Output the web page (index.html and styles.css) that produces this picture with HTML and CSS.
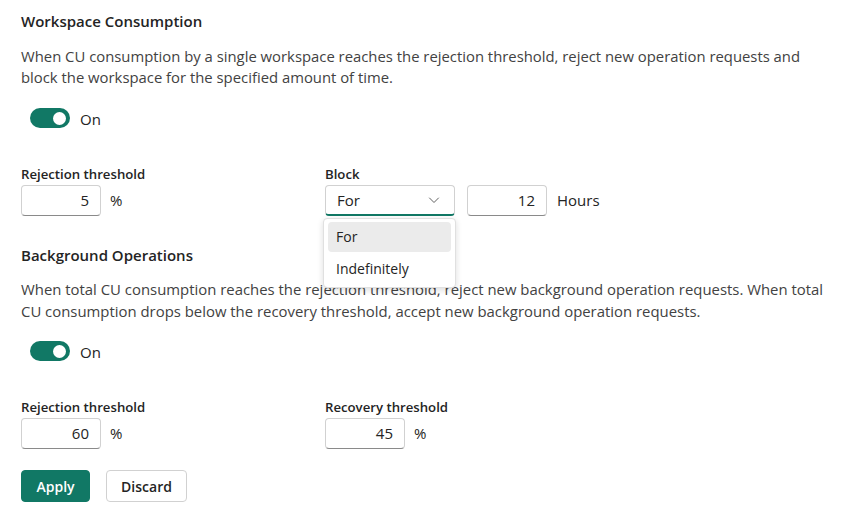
FILE: index.html
```html
<!DOCTYPE html>
<html lang="en">
<head>
<meta charset="utf-8">
<title>Capacity settings</title>
<link rel="stylesheet" href="styles.css">
</head>
<body>
<main class="page">
  <section class="section">
    <h2 class="title">Workspace Consumption</h2>
    <p class="desc">When CU consumption by a single workspace reaches the rejection threshold, reject new operation requests and<br>block the workspace for the specified amount of time.</p>
    <div class="switch-row">
      <span class="switch"><span class="knob"></span></span>
      <span class="switch-label">On</span>
    </div>
    <div class="fields">
      <div class="field">
        <label class="label">Rejection threshold</label>
        <div class="control">
          <div class="input"><span>5</span></div>
          <span class="unit">%</span>
        </div>
      </div>
      <div class="field">
        <label class="label">Block</label>
        <div class="control">
          <div class="select-wrap">
            <div class="select">
              <span>For</span>
              <svg class="chev" width="12" height="12" viewBox="0 0 12 12"><path d="M1.5 4 L6 8.5 L10.5 4" fill="none" stroke="#616161" stroke-width="1" stroke-linecap="round" stroke-linejoin="round"/></svg>
            </div>
            <div class="listbox">
              <div class="option selected">For</div>
              <div class="option">Indefinitely</div>
            </div>
          </div>
          <div class="input"><span>12</span></div>
          <span class="unit hours">Hours</span>
        </div>
      </div>
    </div>
  </section>

  <section class="section second">
    <h2 class="title">Background Operations</h2>
    <p class="desc desc2">When total CU consumption reaches the rejection threshold, reject new background operation requests. When total<br>CU consumption drops below the recovery threshold, accept new background operation requests.</p>
    <div class="switch-row">
      <span class="switch"><span class="knob"></span></span>
      <span class="switch-label">On</span>
    </div>
    <div class="fields">
      <div class="field">
        <label class="label">Rejection threshold</label>
        <div class="control">
          <div class="input"><span>60</span></div>
          <span class="unit">%</span>
        </div>
      </div>
      <div class="field">
        <label class="label">Recovery threshold</label>
        <div class="control">
          <div class="input"><span>45</span></div>
          <span class="unit">%</span>
        </div>
      </div>
    </div>
  </section>

  <div class="actions">
    <button class="btn primary">Apply</button>
    <button class="btn secondary">Discard</button>
  </div>
</main>
</body>
</html>
```

FILE: styles.css
```css
html, body {
  margin: 0;
  padding: 0;
  background: #ffffff;
}
body {
  font-family: "Open Sans", "Noto Sans", sans-serif;
  font-size: 14px;
  color: #242424;
}
.page {
  padding: 11px 0 0 21px;
  display: flex;
  flex-direction: column;
}
.section {
  display: flex;
  flex-direction: column;
}
.second {
  margin-top: 29px;
}
.title {
  margin: 0;
  font-size: 15px;
  font-weight: 600;
  line-height: 21px;
}
.desc {
  margin: 14px 0 0;
  font-size: 14.85px;
  line-height: 21px;
  color: #424242;
  white-space: nowrap;
}
.desc2 {
  margin-top: 12px;
  font-size: 14.9px;
  line-height: 22px;
}
.switch-row {
  margin-top: 20px;
  display: flex;
  align-items: center;
  height: 20px;
  padding-left: 9px;
}
.second .switch-row {
  margin-top: 19px;
}
.switch {
  width: 40px;
  height: 20px;
  border-radius: 10px;
  background: #117865;
  display: flex;
  align-items: center;
  justify-content: flex-end;
  padding-right: 4px;
  box-sizing: border-box;
}
.knob {
  width: 13px;
  height: 13px;
  border-radius: 50%;
  background: #ffffff;
}
.switch-label {
  margin-left: 10px;
  font-size: 15px;
  line-height: 20px;
  position: relative;
  top: 1px;
}
.fields {
  margin-top: 36px;
  display: grid;
  grid-template-columns: 304px auto;
}
.field {
  display: flex;
  flex-direction: column;
}
.label {
  font-size: 13.2px;
  font-weight: 600;
  line-height: 20px;
}
.control {
  display: flex;
  align-items: center;
  height: 32px;
}
.input {
  width: 80px;
  height: 31px;
  box-sizing: border-box;
  border: 1px solid #d1d1d1;
  border-bottom-color: #8a8a8a;
  border-radius: 4px;
  display: flex;
  align-items: center;
  justify-content: flex-end;
  padding-right: 11px;
  font-size: 15px;
  color: #242424;
}
.unit {
  margin-left: 9px;
  font-size: 15px;
}
.hours {
  margin-left: 10px;
}
.select-wrap {
  position: relative;
  margin-right: 12px;
}
.select {
  width: 130px;
  height: 31px;
  box-sizing: border-box;
  border: 1px solid #d1d1d1;
  border-bottom: 2px solid #117865;
  border-radius: 4px;
  display: flex;
  align-items: center;
  justify-content: space-between;
  padding: 0 14px 0 11px;
  font-size: 15px;
}
.chev {
  display: block;
}
.listbox {
  position: absolute;
  top: 33px;
  left: -2px;
  width: 133px;
  box-sizing: border-box;
  background: #ffffff;
  border: 1px solid #e0e0e0;
  border-radius: 4px;
  box-shadow: 0 2px 6px rgba(0,0,0,0.14);
  padding: 3px 4px;
  display: flex;
  flex-direction: column;
  gap: 2px;
  z-index: 2;
}
.option {
  height: 30px;
  display: flex;
  align-items: center;
  padding-left: 8px;
  border-radius: 4px;
  font-size: 14px;
  color: #242424;
}
.option.selected {
  background: #ebebeb;
}
.actions {
  margin-top: 21px;
  display: flex;
  gap: 16px;
}
.btn {
  height: 32px;
  box-sizing: border-box;
  border-radius: 4px;
  font-family: "Open Sans", "Noto Sans", sans-serif;
  font-size: 14px;
  font-weight: 600;
  padding: 0;
  cursor: pointer;
}
.primary {
  width: 69px;
  background: #117865;
  color: #ffffff;
  border: 1px solid #117865;
}
.secondary {
  width: 81px;
  background: #ffffff;
  color: #242424;
  border: 1px solid #d1d1d1;
}
```
